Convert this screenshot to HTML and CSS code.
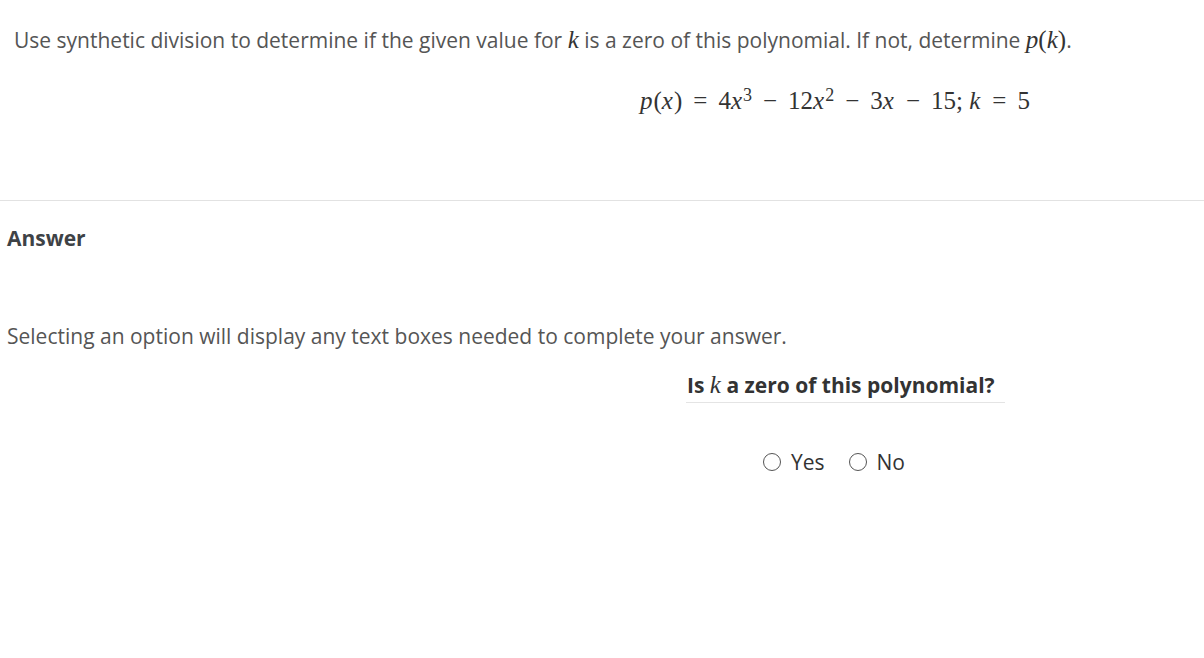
FILE: index.html
```html
<!DOCTYPE html>
<html lang="en">
<head>
  <meta charset="UTF-8" />
  <title>Synthetic Division</title>
  <link rel="stylesheet" href="styles.css">
</head>
<body>
  <div class="question">
    <p class="prompt">Use synthetic division to determine if the given value for <i class="m">k</i> is a zero of this polynomial. If not, determine <i class="m">p</i><span class="m">(</span><i class="m">k</i><span class="m">)</span>.</p>
    <div class="equation">
      <i>p</i>(<i>x</i>)<span class="op">=</span>4<i>x</i><sup>3</sup><span class="op">&minus;</span>12<i>x</i><sup>2</sup><span class="op">&minus;</span>3<i>x</i><span class="op">&minus;</span>15; <i>k</i><span class="op">=</span>5
    </div>
  </div>

  <div class="answer">
    <h3>Answer</h3>
    <p class="hint">Selecting an option will display any text boxes needed to complete your answer.</p>

    <div class="choice">
      <div class="choice-title">Is <i class="m">k</i> a zero of this polynomial?</div>
      <div class="options">
        <label class="opt"><span class="radio"></span>Yes</label>
        <label class="opt"><span class="radio"></span>No</label>
      </div>
    </div>
  </div>
</body>
</html>
```

FILE: styles.css
```css
body {
  margin: 0;
  font-family: "Open Sans", Arial, sans-serif;
  color: #555;
  background: #fff;
}

.m {
  font-family: "Liberation Serif", "Times New Roman", serif;
  font-size: 25px;
  color: #333;
}

.question {
  padding: 26px 0 0 14px;
  height: 174px;
  border-bottom: 1px solid #e2e2e2;
}

.prompt {
  margin: 0;
  font-size: 21px;
  line-height: 28px;
}

.equation {
  margin: 33px 0 0 626px;
  font-family: "Liberation Serif", "Times New Roman", serif;
  font-size: 25px;
  color: #333;
  white-space: nowrap;
}

.equation i {
  margin-right: 1px;
}

.equation sup {
  font-size: 18px;
  vertical-align: 8px;
  line-height: 0;
}

.equation .op {
  padding: 0 11px;
}

.answer {
  padding: 0 7px;
}

h3 {
  margin: 24px 0 0;
  font-size: 21px;
  font-weight: bold;
  color: #3e4246;
  line-height: 26px;
}

.hint {
  margin: 71px 0 0;
  font-size: 21px;
  line-height: 28px;
}

.choice {
  margin: 22px 0 0 679px;
  width: 319px;
}

.choice-title {
  font-size: 21px;
  font-weight: bold;
  color: #333;
  padding: 0 0 4px 1px;
  border-bottom: 1px solid #e4e4e4;
  line-height: 26px;
}

.choice-title .m {
  font-weight: normal;
  font-size: 25px;
}

.options {
  display: flex;
  gap: 24px;
  padding: 45px 0 0 77px;
}

.opt {
  display: flex;
  align-items: center;
  gap: 10px;
  font-size: 21px;
  color: #333;
}

.radio {
  width: 16px;
  height: 16px;
  border: 1.5px solid #555;
  border-radius: 50%;
}
```
